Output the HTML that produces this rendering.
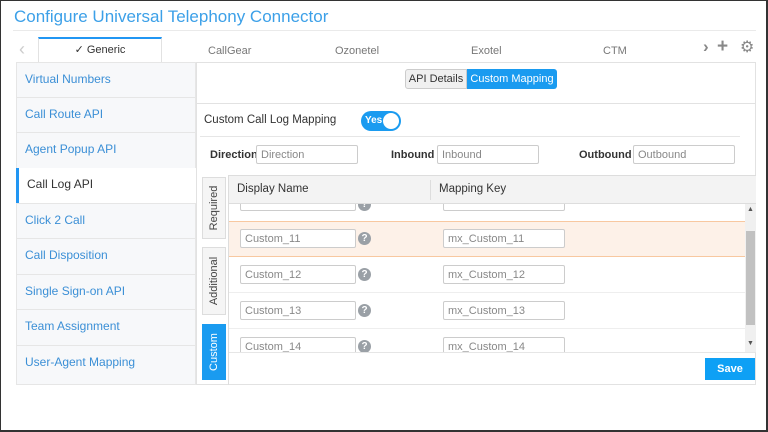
<!DOCTYPE html>
<html><head><style>
*{box-sizing:border-box;margin:0;padding:0}
body{width:768px;height:432px;overflow:hidden;background:#fff;font-family:"Liberation Sans","DejaVu Sans",sans-serif;position:relative}
.a{position:absolute;white-space:nowrap}
.frame{left:0;top:0;width:768px;height:432px;border:1px solid #333;border-right:2px solid #333;border-bottom:2px solid #333}
.t{font-size:11px;color:#777}
.side{left:16px;width:180px;background:#f7f8fa;border:1px solid #e6e6e6;font-size:12px;color:#3b8fd6;padding-left:8px;line-height:33px}
.inp{background:#fff;border:1px solid #ccc;border-radius:2px;font-size:11px;color:#888;padding-left:4px;line-height:18px;height:19px}
.q{width:13px;height:13px;border-radius:50%;background:#9aa0a6;color:#fff;font-size:10px;font-weight:bold;text-align:center;line-height:13px}
.lbl{font-size:11px;color:#333;font-weight:bold}
</style></head><body>
<div class="a frame"></div>
<div class="a" style="left:14px;top:7px;font-size:17px;color:#3ca0e8">Configure Universal Telephony Connector</div>
<div class="a" style="left:13px;top:30px;width:743px;height:1px;background:#eaeaea"></div>
<div class="a" style="left:19px;top:39px;font-size:18px;color:#ccc">&#8249;</div>
<div class="a" style="left:38px;top:37px;width:124px;height:26px;border:1px solid #e2e2e2;border-top:2px solid #2196f3;border-bottom:none;background:#fff;text-align:center;font-size:11px;color:#333;line-height:22px">✓ Generic</div>
<div class="a t" style="left:208px;top:45px">CallGear</div>
<div class="a t" style="left:335px;top:45px">Ozonetel</div>
<div class="a t" style="left:471px;top:45px">Exotel</div>
<div class="a t" style="left:603px;top:45px">CTM</div>
<div class="a" style="left:703px;top:37px;font-size:17px;color:#888;font-weight:bold">&#8250;</div>
<div class="a" style="left:717px;top:36px;font-size:19px;color:#888;font-weight:bold">+</div>
<div class="a" style="left:740px;top:37px;font-size:16px;color:#888">&#9881;</div>

<div class="a side" style="top:62px;height:36px">Virtual Numbers</div>
<div class="a side" style="top:97px;height:36px">Call Route API</div>
<div class="a side" style="top:132px;height:37px">Agent Popup API</div>
<div class="a" style="left:16px;top:168px;width:180px;height:36px;background:#fff;border-left:3px solid #2196f3;font-size:12px;color:#333;padding-left:8px;line-height:33px">Call Log API</div>
<div class="a side" style="top:203px;height:36px">Click 2 Call</div>
<div class="a side" style="top:238px;height:37px">Call Disposition</div>
<div class="a side" style="top:274px;height:36px">Single Sign-on API</div>
<div class="a side" style="top:309px;height:37px">Team Assignment</div>
<div class="a side" style="top:345px;height:40px">User-Agent Mapping</div>

<div class="a" style="left:196px;top:62px;width:560px;height:42px;border:1px solid #e2e2e2"></div>
<div class="a" style="left:405px;top:69px;width:62px;height:20px;background:#f0f0f0;border:1px solid #ccc;border-radius:3px 0 0 3px;font-size:11px;color:#333;text-align:center;line-height:18px">API Details</div>
<div class="a" style="left:467px;top:69px;width:90px;height:20px;background:#1a9bf0;border-radius:0 3px 3px 0;font-size:11px;color:#fff;text-align:center;line-height:20px">Custom Mapping</div>

<div class="a" style="left:196px;top:104px;width:560px;height:281px;border:1px solid #e2e2e2;border-top:none"></div>
<div class="a" style="left:204px;top:114px;font-size:11.5px;color:#333">Custom Call Log Mapping</div>
<div class="a" style="left:361px;top:111px;width:40px;height:20px;border-radius:10px;background:#1a9bf0"></div>
<div class="a" style="left:365px;top:115px;font-size:10px;line-height:12px;color:#fff;font-weight:bold">Yes</div>
<div class="a" style="left:383px;top:113px;width:16px;height:16px;border-radius:50%;background:#fff"></div>
<div class="a" style="left:200px;top:136px;width:540px;height:1px;background:#e6e6e6"></div>
<div class="a lbl" style="left:210px;top:149px">Direction</div>
<div class="a inp" style="left:256px;top:145px;width:102px">Direction</div>
<div class="a lbl" style="left:391px;top:149px">Inbound</div>
<div class="a inp" style="left:437px;top:145px;width:102px">Inbound</div>
<div class="a lbl" style="left:579px;top:149px">Outbound</div>
<div class="a inp" style="left:633px;top:145px;width:102px">Outbound</div>

<div class="a" style="left:202px;top:177px;width:24px;height:62px;background:#f5f5f5;border:1px solid #ddd"></div>
<div class="a" style="left:214px;top:208px;transform:translate(-50%,-50%) rotate(-90deg);font-size:11px;color:#444">Required</div>
<div class="a" style="left:202px;top:247px;width:24px;height:68px;background:#f5f5f5;border:1px solid #ddd"></div>
<div class="a" style="left:214px;top:281px;transform:translate(-50%,-50%) rotate(-90deg);font-size:11px;color:#444">Additional</div>
<div class="a" style="left:202px;top:324px;width:24px;height:56px;background:#1a9bf0"></div>
<div class="a" style="left:214px;top:352px;transform:translate(-50%,-50%) rotate(-90deg);font-size:11px;color:#fff">Custom</div>

<div class="a" style="left:228px;top:175px;width:528px;height:210px;border-left:1px solid #ddd;border-top:1px solid #ddd"></div>
<div class="a" style="left:229px;top:176px;width:527px;height:28px;background:#f3f3f3;border-bottom:1px solid #ddd"></div>
<div class="a" style="left:430px;top:180px;width:1px;height:20px;background:#ddd"></div>
<div class="a" style="left:237px;top:183px;font-size:11.5px;color:#333">Display Name</div>
<div class="a" style="left:439px;top:183px;font-size:11.5px;color:#333">Mapping Key</div>

<div style="position:absolute;left:229px;top:204px;width:516px;height:148px;overflow:hidden">
 <div class="a inp" style="left:11px;top:-12px;width:116px"></div>
 <div class="a q" style="left:129px;top:-6px">?</div>
 <div class="a inp" style="left:214px;top:-12px;width:122px"></div>
 <div class="a" style="left:0;top:17px;width:516px;height:36px;background:#fdf1e8;border-top:1px solid #f8c8a0;border-bottom:1px solid #f8c8a0"></div>
 <div class="a inp" style="left:11px;top:25px;width:116px">Custom_11</div>
 <div class="a q" style="left:129px;top:28px">?</div>
 <div class="a inp" style="left:214px;top:25px;width:122px">mx_Custom_11</div>
 <div class="a inp" style="left:11px;top:61px;width:116px">Custom_12</div>
 <div class="a q" style="left:129px;top:64px">?</div>
 <div class="a inp" style="left:214px;top:61px;width:122px">mx_Custom_12</div>
 <div class="a" style="left:0;top:88px;width:516px;height:1px;background:#eee"></div>
 <div class="a inp" style="left:11px;top:97px;width:116px">Custom_13</div>
 <div class="a q" style="left:129px;top:100px">?</div>
 <div class="a inp" style="left:214px;top:97px;width:122px">mx_Custom_13</div>
 <div class="a" style="left:0;top:124px;width:516px;height:1px;background:#eee"></div>
 <div class="a inp" style="left:11px;top:133px;width:116px">Custom_14</div>
 <div class="a q" style="left:129px;top:136px">?</div>
 <div class="a inp" style="left:214px;top:133px;width:122px">mx_Custom_14</div>
</div>
<div class="a" style="left:745px;top:204px;width:11px;height:148px;background:#f0f0f0"></div>
<div class="a" style="left:746px;top:231px;width:9px;height:94px;background:#c1c1c1"></div>
<div class="a" style="left:747px;top:206px;font-size:7px;color:#555">&#9650;</div>
<div class="a" style="left:747px;top:340px;font-size:7px;color:#555">&#9660;</div>
<div class="a" style="left:229px;top:352px;width:527px;height:1px;background:#e6e6e6"></div>
<div class="a" style="left:705px;top:358px;width:50px;height:22px;background:#0ea0f5;color:#fff;font-size:11px;font-weight:bold;text-align:center;line-height:22px">Save</div>
</body></html>
